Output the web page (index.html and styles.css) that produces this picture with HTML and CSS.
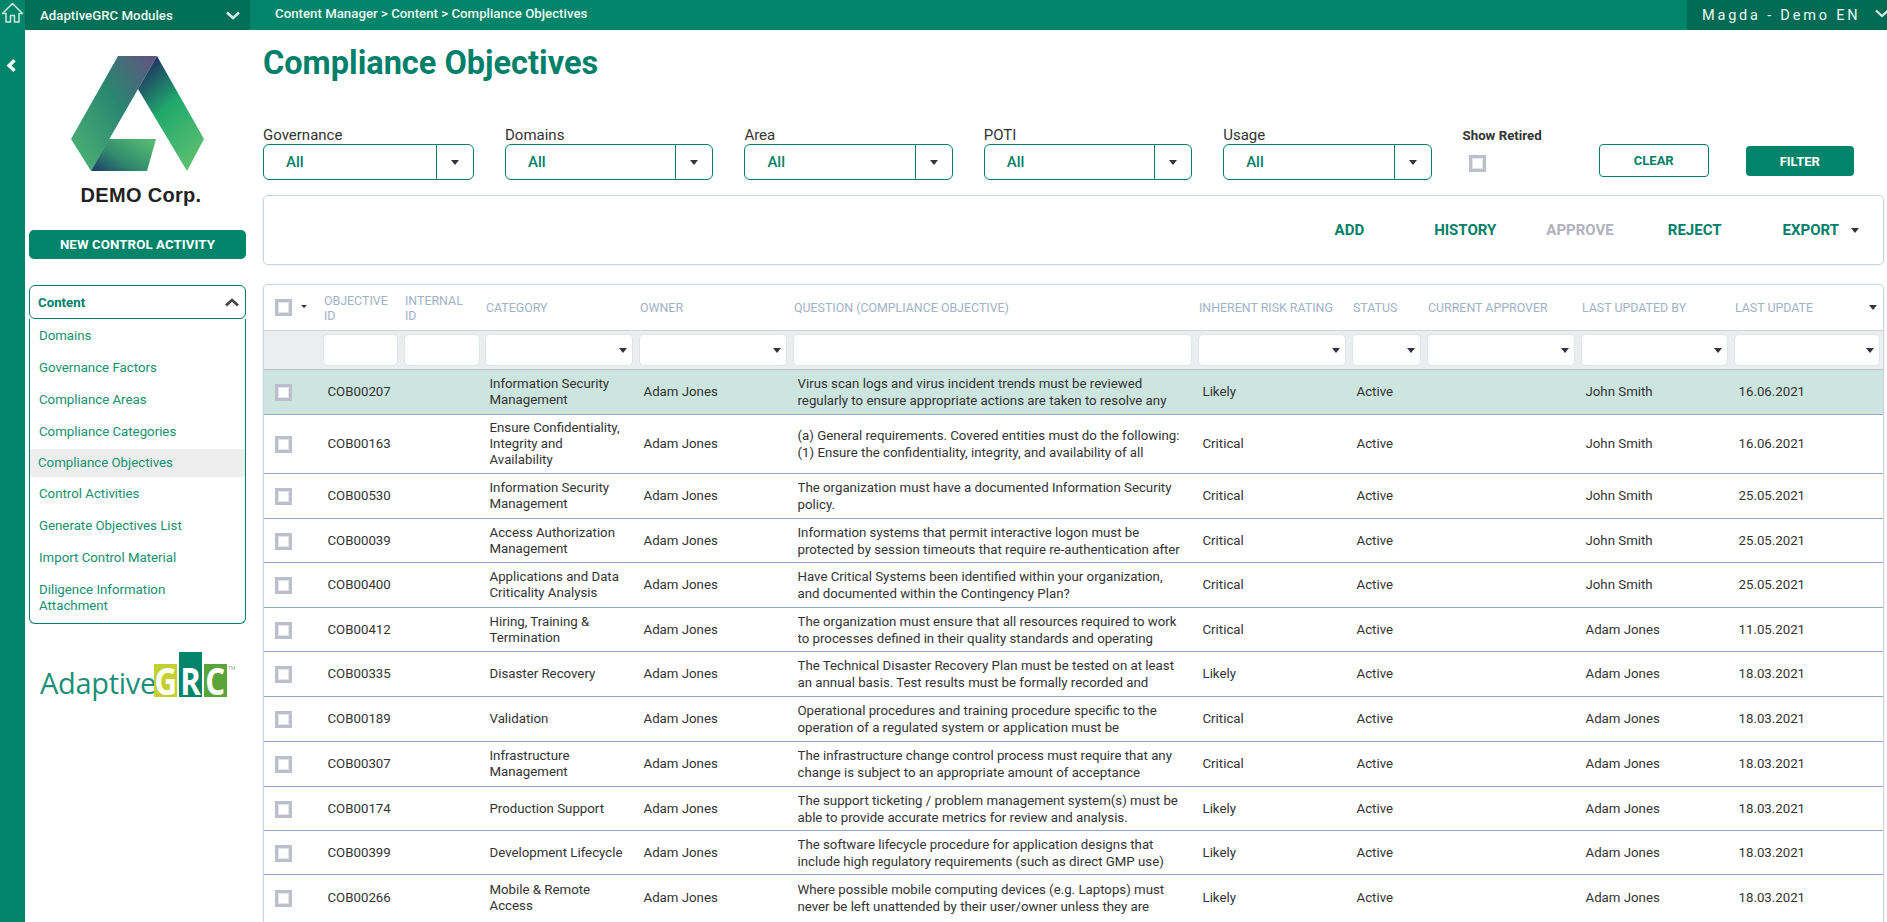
FILE: index.html
```html
<!DOCTYPE html>
<html lang="en">
<head>
<meta charset="utf-8">
<title>Compliance Objectives</title>
<link rel="stylesheet" href="styles.css">
</head>
<body>
<header class="topbar">
  <div class="home">
    <svg width="24" height="24" viewBox="0 0 24 24" fill="none" stroke="#cfe9e0" stroke-width="1.500" stroke-linejoin="round"><path d="M1.500 12.500 11.500 2.500l10 10H18V21h-4.500v-6.500H9.500V21H5v-8.500Z"/></svg>
  </div>
  <div class="modules"><span>AdaptiveGRC Modules</span>
    <svg width="14" height="9" viewBox="0 0 14 9" fill="none" stroke="#d6efe6" stroke-width="2.600"><path d="M1 1.500 7 7l6-5.500"/></svg>
  </div>
  <div class="crumbs">Content Manager &gt; Content &gt; Compliance Objectives</div>
  <div class="user"><span>Magda - Demo EN</span>
    <svg class="user-chev" width="14" height="9" viewBox="0 0 14 9" fill="none" stroke="#d6efe6" stroke-width="2.200"><path d="M1 1.500 7 7l6-5.500"/></svg>
  </div>
</header>
<div class="body">
  <nav class="rail">
    <svg width="10" height="13" viewBox="0 0 10 13" fill="none" stroke="#fff" stroke-width="3.400"><path d="M8.500 1.200 3 6.500l5.500 5.300"/></svg>
  </nav>
  <aside class="side">
    <div class="brand">
      <svg width="134" height="117" viewBox="0 0 134 117">
        <defs>
          <linearGradient id="g1" x1="0" y1="1" x2="1" y2="0.1"><stop offset="0" stop-color="#4db874"/><stop offset="0.6" stop-color="#2a8570"/><stop offset="1" stop-color="#5f5680"/></linearGradient>
          <linearGradient id="g2" x1="0.2" y1="0" x2="0.7" y2="1"><stop offset="0" stop-color="#1f2c63"/><stop offset="0.45" stop-color="#20a86c"/><stop offset="1" stop-color="#5cc070"/></linearGradient>
          <linearGradient id="g3" x1="0" y1="1" x2="1" y2="0.2"><stop offset="0" stop-color="#1f3a6a"/><stop offset="0.45" stop-color="#2f8a6c"/><stop offset="1" stop-color="#55b873"/></linearGradient>
        </defs>
        <path fill="url(#g1)" d="M48 0H87L21 115 1 83Z"/>
        <path fill="url(#g2)" d="M87 0 134 83 117 115 68 33Z"/>
        <path fill="url(#g3)" d="M21 115 39 83H86L77 115Z"/>
      </svg>
      <div class="brand-name">DEMO Corp.</div>
    </div>
    <button class="new-btn">NEW CONTROL ACTIVITY</button>
    <div class="menu-head"><span>Content</span>
      <svg width="14" height="9" viewBox="0 0 14 9" fill="none" stroke="#444" stroke-width="2.600"><path d="M1 7.500 7 2l6 5.500"/></svg>
    </div>
    <ul class="menu">
      <li>Domains</li>
      <li>Governance Factors</li>
      <li>Compliance Areas</li>
      <li>Compliance Categories</li>
      <li class="active">Compliance Objectives</li>
      <li>Control Activities</li>
      <li>Generate Objectives List</li>
      <li>Import Control Material</li>
      <li>Diligence Information Attachment</li>
    </ul>
    <div class="agrc">
      <span class="agrc-word">Adaptive</span>
      <span class="tile tile-g"><span>G</span></span>
      <span class="tile tile-r"><span>R</span></span>
      <span class="tile tile-c"><span>C</span></span>
      <span class="tm">TM</span>
    </div>
  </aside>
  <main class="main">
    <h1>Compliance Objectives</h1>
    <section class="filters">
      <div class="field f-w1"><label>Governance</label><div class="combo"><span>All</span><i class="combo-arrow"><b class="caret"></b></i></div></div>
      <div class="field f-w2"><label>Domains</label><div class="combo"><span>All</span><i class="combo-arrow"><b class="caret"></b></i></div></div>
      <div class="field f-w2"><label>Area</label><div class="combo"><span>All</span><i class="combo-arrow"><b class="caret"></b></i></div></div>
      <div class="field f-w2"><label>POTI</label><div class="combo"><span>All</span><i class="combo-arrow"><b class="caret"></b></i></div></div>
      <div class="field f-w2"><label>Usage</label><div class="combo"><span>All</span><i class="combo-arrow"><b class="caret"></b></i></div></div>
      <div class="retired"><label>Show Retired</label><span class="check"></span></div>
      <button class="btn-clear">CLEAR</button>
      <button class="btn-filter">FILTER</button>
    </section>
    <section class="actions">
      <a class="act a-add">ADD</a>
      <a class="act a-history">HISTORY</a>
      <a class="act a-approve">APPROVE</a>
      <a class="act a-reject">REJECT</a>
      <a class="act a-export">EXPORT<b class="caret"></b></a>
    </section>
    <section class="grid">
      <table>
        <colgroup>
          <col class="c0"><col class="c1"><col class="c2"><col class="c3"><col class="c4"><col class="c5"><col class="c6"><col class="c7"><col class="c8"><col class="c9"><col class="c10">
        </colgroup>
        <thead>
          <tr class="head">
            <th><span class="check"></span><b class="caret caret-sm"></b></th>
            <th>OBJECTIVE ID</th><th>INTERNAL ID</th><th>CATEGORY</th><th>OWNER</th><th>QUESTION (COMPLIANCE OBJECTIVE)</th><th>INHERENT RISK RATING</th><th>STATUS</th><th>CURRENT APPROVER</th><th>LAST UPDATED BY</th><th class="last-h">LAST UPDATE<b class="caret"></b></th>
          </tr>
          <tr class="filter-row">
            <td></td>
            <td><div class="fi"></div></td>
            <td><div class="fi"></div></td>
            <td><div class="fi sel"><b class="caret"></b></div></td>
            <td><div class="fi sel"><b class="caret"></b></div></td>
            <td><div class="fi"></div></td>
            <td><div class="fi sel"><b class="caret"></b></div></td>
            <td><div class="fi sel"><b class="caret"></b></div></td>
            <td><div class="fi sel"><b class="caret"></b></div></td>
            <td><div class="fi sel"><b class="caret"></b></div></td>
            <td><div class="fi sel"><b class="caret"></b></div></td>
          </tr>
        </thead>
        <tbody>
          <tr class="selected"><td><span class="check"></span></td><td>COB00207</td><td></td><td>Information Security Management</td><td>Adam Jones</td><td><div class="q">Virus scan logs and virus incident trends must be reviewed regularly to ensure appropriate actions are taken to resolve any</div></td><td>Likely</td><td>Active</td><td></td><td>John Smith</td><td>16.06.2021</td></tr>
          <tr class="tall"><td><span class="check"></span></td><td>COB00163</td><td></td><td>Ensure Confidentiality, Integrity and Availability</td><td>Adam Jones</td><td><div class="q">(a) General requirements. Covered entities must do the following: (1) Ensure the confidentiality, integrity, and availability of all</div></td><td>Critical</td><td>Active</td><td></td><td>John Smith</td><td>16.06.2021</td></tr>
          <tr><td><span class="check"></span></td><td>COB00530</td><td></td><td>Information Security Management</td><td>Adam Jones</td><td><div class="q">The organization must have a documented Information Security policy.</div></td><td>Critical</td><td>Active</td><td></td><td>John Smith</td><td>25.05.2021</td></tr>
          <tr class="short"><td><span class="check"></span></td><td>COB00039</td><td></td><td>Access Authorization Management</td><td>Adam Jones</td><td><div class="q">Information systems that permit interactive logon must be protected by session timeouts that require re-authentication after</div></td><td>Critical</td><td>Active</td><td></td><td>John Smith</td><td>25.05.2021</td></tr>
          <tr><td><span class="check"></span></td><td>COB00400</td><td></td><td>Applications and Data Criticality Analysis</td><td>Adam Jones</td><td><div class="q">Have Critical Systems been identified within your organization, and documented within the Contingency Plan?</div></td><td>Critical</td><td>Active</td><td></td><td>John Smith</td><td>25.05.2021</td></tr>
          <tr class="short"><td><span class="check"></span></td><td>COB00412</td><td></td><td>Hiring, Training &amp; Termination</td><td>Adam Jones</td><td><div class="q">The organization must ensure that all resources required to work to processes defined in their quality standards and operating</div></td><td>Critical</td><td>Active</td><td></td><td>Adam Jones</td><td>11.05.2021</td></tr>
          <tr><td><span class="check"></span></td><td>COB00335</td><td></td><td>Disaster Recovery</td><td>Adam Jones</td><td><div class="q">The Technical Disaster Recovery Plan must be tested on at least an annual basis. Test results must be formally recorded and</div></td><td>Likely</td><td>Active</td><td></td><td>Adam Jones</td><td>18.03.2021</td></tr>
          <tr><td><span class="check"></span></td><td>COB00189</td><td></td><td>Validation</td><td>Adam Jones</td><td><div class="q">Operational procedures and training procedure specific to the operation of a regulated system or application must be</div></td><td>Critical</td><td>Active</td><td></td><td>Adam Jones</td><td>18.03.2021</td></tr>
          <tr><td><span class="check"></span></td><td>COB00307</td><td></td><td>Infrastructure Management</td><td>Adam Jones</td><td><div class="q">The infrastructure change control process must require that any change is subject to an appropriate amount of acceptance</div></td><td>Critical</td><td>Active</td><td></td><td>Adam Jones</td><td>18.03.2021</td></tr>
          <tr class="short"><td><span class="check"></span></td><td>COB00174</td><td></td><td>Production Support</td><td>Adam Jones</td><td><div class="q">The support ticketing / problem management system(s) must be able to provide accurate metrics for review and analysis.</div></td><td>Likely</td><td>Active</td><td></td><td>Adam Jones</td><td>18.03.2021</td></tr>
          <tr class="short"><td><span class="check"></span></td><td>COB00399</td><td></td><td>Development Lifecycle</td><td>Adam Jones</td><td><div class="q">The software lifecycle procedure for application designs that include high regulatory requirements (such as direct GMP use)</div></td><td>Likely</td><td>Active</td><td></td><td>Adam Jones</td><td>18.03.2021</td></tr>
          <tr class="tail"><td><span class="check"></span></td><td>COB00266</td><td></td><td>Mobile &amp; Remote Access</td><td>Adam Jones</td><td><div class="q">Where possible mobile computing devices (e.g. Laptops) must never be left unattended by their user/owner unless they are</div></td><td>Likely</td><td>Active</td><td></td><td>Adam Jones</td><td>18.03.2021</td></tr>
        </tbody>
      </table>
    </section>
  </main>
</div>
</body>
</html>
```
FILE: styles.css
```css
* { box-sizing: border-box; }
html, body { height: 100%; }
body { margin: 0; height: 922px; overflow: hidden; background: #fff; font-family: Roboto, "Liberation Sans", sans-serif; font-size: 13.250px; color: #333; display: flex; flex-direction: column; }

.topbar { height: 30px; flex: none; background: #00856a; display: flex; align-items: stretch; color: #eef8f4; font-weight: 500; }
.home { width: 25px; display: flex; align-items: flex-start; justify-content: center; padding-top: 1px; }
.modules { width: 225px; background: #006f58; display: flex; align-items: center; justify-content: space-between; padding: 0 10px 0 15px; }
.crumbs { flex: 1; padding-left: 25px; line-height: 28px; }
.user { width: 200px; background: #006b55; display: flex; align-items: center; padding-left: 15px; position: relative; overflow: hidden; font-weight: 400; font-size: 14.500px; letter-spacing: 2.800px; }
.user-chev { position: absolute; left: 188px; top: 9px; }

.body { flex: 1; display: flex; min-height: 0; }
.rail { width: 25px; flex: none; background: #00856a; padding: 29px 0 0 6px; }

.side { width: 225px; flex: none; padding: 0 4px; }
.brand { display: flex; flex-direction: column; align-items: center; padding: 26px 25px 0 23px; height: 200px; }
.brand svg { display: block; flex: none; }
.brand-name { font-family: "Liberation Sans", Arial, sans-serif; font-weight: 700; font-size: 20px; line-height: 23px; margin: 11px 0 0 9px; color: #222; white-space: nowrap; letter-spacing: .3px; }
.new-btn { display: block; width: 217px; height: 29px; border: 0; border-radius: 5px; background: #00856a; color: #fff; font: 700 13.250px Roboto, sans-serif; letter-spacing: .1px; padding: 0; }
.menu-head { margin-top: 26px; width: 217px; height: 34px; border: 1.500px solid #00806a; border-radius: 6px; display: flex; align-items: center; justify-content: space-between; padding: 0 6px 0 8px; color: #00806a; font-weight: 700; }
.menu { list-style: none; margin: 0; padding: 1px 0 0; width: 217px; border: 1px solid #00806a; border-top-width: 0; border-radius: 0 0 6px 6px; color: #15906f; height: 305px; }
.menu li { padding: 8px 30px 8px 9px; line-height: 16px; }
.menu li.active { padding: 6px 8px; margin: 1px 0; background: #eeeeee; }

.agrc { display: flex; align-items: flex-end; height: 46px; margin: 27px 0 0 11px; position: relative; }
.agrc-word { font-family: "Open Sans", sans-serif; font-size: 29px; font-weight: 500; line-height: 37px; color: #1d8f78; width: 114px; letter-spacing: -.3px; height: 33px; }
.tile { color: #fff; font: 700 38px/33px "Open Sans", sans-serif; width: 23px; height: 33px; display: flex; align-items: flex-end; justify-content: center; }
.tile span { display: block; transform: scaleX(.82); height: 33px; }
.tile-g { background: #c3d02f; }
.tile-r { background: #00856a; height: 45px; margin: 0 2px; }
.tile-c { background: #5aa53a; }
.tm { font-size: 5px; color: #9a9; position: absolute; left: 188px; top: 14px; }

.main { flex: 1; min-width: 0; padding: 0 3px 0 13px; display: flex; flex-direction: column; }
h1 { margin: 0; font-size: 32.500px; font-weight: 700; color: #00806a; line-height: 36px; padding-top: 15px; height: 103px; flex: none; }

.filters { display: flex; align-items: flex-start; height: 62px; flex: none; }
.field { margin-right: 31px; }
.f-w1 { width: 211px; }
.f-w2 { width: 208.400px; }
.field label { display: block; font-size: 15px; line-height: 16px; color: #333; height: 16px; margin-top: -6px; margin-bottom: 1px; }
.combo { height: 36px; border: 1.500px solid #00806a; border-radius: 6px; display: flex; align-items: center; color: #00806a; font-size: 15px; font-weight: 500; }
.combo span { flex: 1; padding-left: 22px; }
.combo-arrow { width: 37px; height: 100%; border-left: 1px solid #00806a; display: flex; align-items: center; justify-content: center; }
.caret { display: inline-block; width: 0; height: 0; border: 4px solid transparent; border-top: 5px solid #333344; border-bottom: 0; }
.retired { width: 136.200px; }
.retired label { display: block; font-size: 13.250px; font-weight: 700; line-height: 16px; margin-top: -5px; color: #333; }
.retired .check { display: block; margin: 11px 0 0 6.500px; }
.check { display: inline-block; width: 17px; height: 17px; border: 3px solid #bcbfcb; background: #fff; box-shadow: inset 0 0 0 1px #e4e5ea; }
.btn-clear { width: 110px; height: 33px; margin: 11px 37px 0 0; background: #fff; border: 1px solid #00806a; border-radius: 4px; color: #00806a; font: 700 13px Roboto, sans-serif; padding: 0; }
.btn-filter { width: 108px; height: 30px; margin-top: 13px; background: #00856a; border: 0; border-radius: 4px; color: #fff; font: 700 13px Roboto, sans-serif; padding: 0; }

.actions { height: 70px; flex: none; border: 1px solid #c9d4e0; border-radius: 5px; box-shadow: 0 0 2px rgba(120,140,160,.25); display: flex; align-items: center; justify-content: flex-end; color: #00806a; font-size: 15px; font-weight: 700; padding-right: 24px; }
.act { display: block; white-space: nowrap; margin-left: 50px; }
.a-history { margin-left: 70px; }
.a-approve { color: #b1b2bd; }
.a-reject { margin-left: 54px; }
.a-export { margin-left: 61px; display: flex; align-items: center; }
.a-export .caret { margin-left: 12px; }

.grid { margin-top: 19px; flex: 1; min-height: 0; border: 1px solid #c9d4e0; border-bottom: 0; border-radius: 5px 5px 0 0; box-shadow: 0 0 2px rgba(120,140,160,.25); overflow: hidden; }
table { border-collapse: separate; border-spacing: 0; table-layout: fixed; width: 1619px; }
.c0 { width: 55px; } .c1 { width: 81px; } .c2 { width: 82px; } .c3 { width: 154px; } .c4 { width: 154px; } .c5 { width: 405px; } .c6 { width: 154px; } .c7 { width: 75px; } .c8 { width: 154px; } .c9 { width: 153px; } .c10 { width: 152px; }
th { text-align: left; font-weight: 400; font-size: 12.400px; line-height: 15px; color: #9fb2c8; padding: 0 12px 0 4px; border-bottom: 1px solid #cfd2d6; }
th:nth-child(2), th:nth-child(3) { padding-left: 5px; }
th:nth-child(n+7) { padding-right: 0; }
.head { height: 46px; }
th:first-child { padding: 3px 0 0 11px; white-space: nowrap; }
.caret-sm { border-width: 3px; border-top-width: 3px; border-bottom: 0; margin-left: 9px; vertical-align: 8px; }
.last-h { position: relative; }
.last-h .caret { position: absolute; right: 6px; top: 20px; }
.filter-row { height: 39px; background: #ebedef; }
.filter-row td { padding: 0 3px; border-bottom: 1px solid #b9bdc2; }
.filter-row td:nth-child(2), .filter-row td:nth-child(3) { padding: 0 2px 0 4px; }
.fi { height: 32px; background: #fff; border: 1px solid #dce6e6; border-radius: 5px; position: relative; }
.fi .caret { position: absolute; right: 5px; top: 13px; }
tbody tr { height: 45px; }
tbody tr.short { height: 44px; }
tbody tr.tall { height: 59px; }
tbody td { padding: 4px 10px 4px 7.500px; line-height: 16px; border-bottom: 1px solid #8fa9c4; vertical-align: middle; }
tbody td:nth-child(2) { padding-left: 8.500px; }
tbody td:first-child { padding: 1px 0 0 11px; }
tbody td:first-child .check { display: block; }
.selected { background: #cce5df; }
.tail td { border-bottom: 0; }
.q { line-height: 17px; max-height: 34px; overflow: hidden; width: 388px; }
```
